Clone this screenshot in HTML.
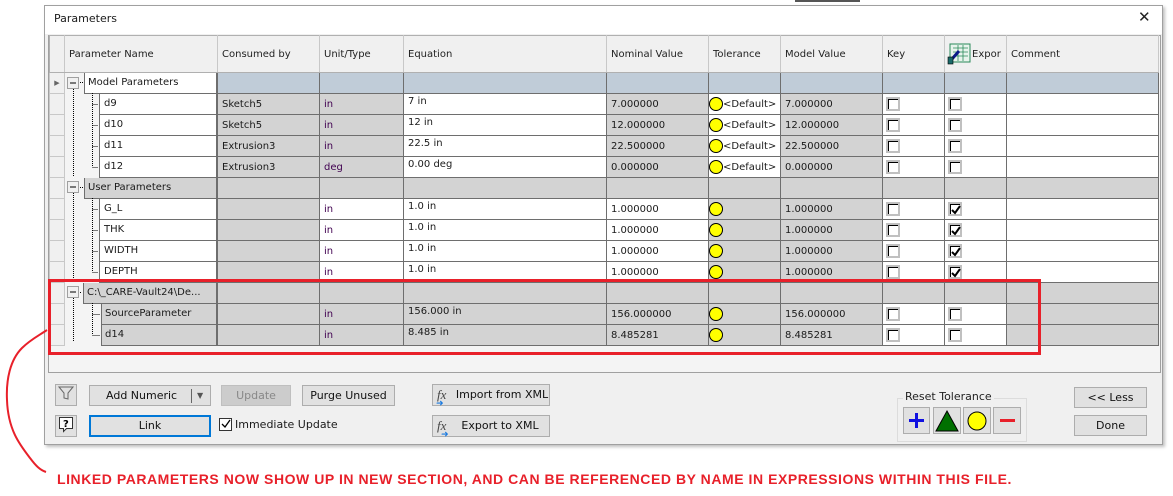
<!DOCTYPE html>
<html><head><meta charset="utf-8"><style>
*{box-sizing:border-box;margin:0;padding:0}
body{width:1173px;height:496px;background:#fff;position:relative;overflow:hidden;font-family:"DejaVu Sans","Liberation Sans",sans-serif;font-size:10px;color:#1a1a1a}
.a{position:absolute}
#dlg{left:44px;top:5px;width:1119px;height:440px;background:#f0f0f0;border:1px solid #a0a0a0;box-shadow:2px 2px 3px rgba(0,0,0,.25)}
#title{left:45px;top:6px;width:1117px;height:28px;background:#fff}
#grid{left:48px;top:35px;width:1113px;height:338px;background:#f4f4f4;border:1px solid #a0a0a0}
table{position:absolute;left:49px;top:35px;border-collapse:collapse;table-layout:fixed}
td{border:1px solid #6e6e6e;height:21px;padding:0 0 0 4px;white-space:nowrap;overflow:hidden;font-size:10px;vertical-align:middle}
tr.h td{height:37px;background:#f0f0f0;border-color:#b0b0b0;border-right-color:#c8c8c8;color:#222}
td.rh{background:#f0f0f0;border-color:#c8c8c8;padding:0}
td.tr{background:#f4f4f4;border:none;padding:0;position:relative}
.n{position:absolute;top:0;right:0;height:21px;border:1px solid #6e6e6e;border-top:none;padding-left:4px;line-height:20px;overflow:hidden}
.w{background:#fff}.g{background:#d3d3d3}.b{background:#c0ccd8}
.u{color:#400050}
.eq{vertical-align:top;padding-top:2px}
.cb{display:inline-block;width:14px;height:14px;border:2px solid #c0c0c0;background:#fff;box-shadow:inset 1px 1px 0 #000;vertical-align:middle;margin-left:-1px;position:relative}
.cb svg{position:absolute;left:1px;top:1px}
.ci{display:inline-block;width:14px;height:14px;border-radius:50%;background:#ffff00;border:1px solid #000;vertical-align:middle;margin-left:-2px}
.btn{position:absolute;background:#e1e1e1;border:1px solid #adadad;text-align:center;font-size:11px;line-height:19px;color:#111;white-space:nowrap}
.red{color:#e8202a}
</style></head><body>
<div class="a" style="left:795px;top:0;width:65px;height:2px;background:#555"></div>
<div id="dlg" class="a"></div>
<div id="title" class="a"></div>
<div class="a" style="left:54px;top:12px;font-size:11px">Parameters</div>
<div class="a" style="left:1138px;top:8px;font-size:15px;color:#222">✕</div>
<div id="grid" class="a"></div>
<table>
<colgroup><col style="width:15px"><col style="width:153px"><col style="width:102px"><col style="width:84px"><col style="width:203px"><col style="width:102px"><col style="width:72px"><col style="width:102px"><col style="width:62px"><col style="width:62px"><col style="width:152px"></colgroup>
<tr class="h"><td class="rh"></td><td>Parameter Name</td><td>Consumed by</td><td>Unit/Type</td><td>Equation</td><td>Nominal Value</td><td>Tolerance</td><td>Model Value</td><td>Key</td><td style="padding-left:2px"><svg width="24" height="22" style="vertical-align:middle"><rect x="3" y="1" width="20" height="18" fill="#e8f4ec" stroke="#2a8a5a"/><path d="M6 5h15M6 9h15M6 13h15M11 2v16M16 2v16" stroke="#2a8a5a" stroke-width=".8"/><path d="M5 16l7-8" stroke="#0a1a8a" stroke-width="3"/><rect x="1" y="14" width="5" height="7" fill="#1a6a6a" stroke="#000" stroke-width=".6"/></svg><span style="margin-left:1px">Expor</span></td><td>Comment</td></tr>
<tr><td class="rh" style="font-size:7px;color:#666;text-align:center">▶</td><td class="tr"><div class="n" style="left:19px;background:#fff;padding-left:3px">Model Parameters</div></td><td class="b"></td><td class="b"></td><td class="b"></td><td class="b"></td><td class="b"></td><td class="b"></td><td class="b"></td><td class="b"></td><td class="b"></td></tr>
<tr><td class="rh"></td><td class="tr"><div class="n" style="left:34px;background:#fff">d9</div></td><td class="g">Sketch5</td><td class="g u">in</td><td class="w eq">7 in</td><td class="g">7.000000</td><td class="w" style="padding-left:2px"><span class="ci"></span>&lt;Default&gt;</td><td class="g">7.000000</td><td class="w"><span class="cb"></span></td><td class="w"><span class="cb"></span></td><td class="w"></td></tr>
<tr><td class="rh"></td><td class="tr"><div class="n" style="left:34px;background:#fff">d10</div></td><td class="g">Sketch5</td><td class="g u">in</td><td class="w eq">12 in</td><td class="g">12.000000</td><td class="w" style="padding-left:2px"><span class="ci"></span>&lt;Default&gt;</td><td class="g">12.000000</td><td class="w"><span class="cb"></span></td><td class="w"><span class="cb"></span></td><td class="w"></td></tr>
<tr><td class="rh"></td><td class="tr"><div class="n" style="left:34px;background:#fff">d11</div></td><td class="g">Extrusion3</td><td class="g u">in</td><td class="w eq">22.5 in</td><td class="g">22.500000</td><td class="w" style="padding-left:2px"><span class="ci"></span>&lt;Default&gt;</td><td class="g">22.500000</td><td class="w"><span class="cb"></span></td><td class="w"><span class="cb"></span></td><td class="w"></td></tr>
<tr><td class="rh"></td><td class="tr"><div class="n" style="left:34px;background:#fff">d12</div></td><td class="g">Extrusion3</td><td class="g u">deg</td><td class="w eq">0.00 deg</td><td class="g">0.000000</td><td class="w" style="padding-left:2px"><span class="ci"></span>&lt;Default&gt;</td><td class="g">0.000000</td><td class="w"><span class="cb"></span></td><td class="w"><span class="cb"></span></td><td class="w"></td></tr>
<tr><td class="rh"></td><td class="tr"><div class="n" style="left:19px;background:#d3d3d3;padding-left:3px">User Parameters</div></td><td class="g"></td><td class="g"></td><td class="g"></td><td class="g"></td><td class="g"></td><td class="g"></td><td class="g"></td><td class="g"></td><td class="g"></td></tr>
<tr><td class="rh"></td><td class="tr"><div class="n" style="left:34px;background:#fff">G_L</div></td><td class="g"></td><td class="w u">in</td><td class="w eq">1.0 in</td><td class="w">1.000000</td><td class="g" style="padding-left:2px"><span class="ci"></span></td><td class="g">1.000000</td><td class="w"><span class="cb"></span></td><td class="w"><span class="cb"><svg width="10" height="10"><path d="M1 5l3 3 5-7" stroke="#000" stroke-width="2" fill="none"/></svg></span></td><td class="w"></td></tr>
<tr><td class="rh"></td><td class="tr"><div class="n" style="left:34px;background:#fff">THK</div></td><td class="g"></td><td class="w u">in</td><td class="w eq">1.0 in</td><td class="w">1.000000</td><td class="g" style="padding-left:2px"><span class="ci"></span></td><td class="g">1.000000</td><td class="w"><span class="cb"></span></td><td class="w"><span class="cb"><svg width="10" height="10"><path d="M1 5l3 3 5-7" stroke="#000" stroke-width="2" fill="none"/></svg></span></td><td class="w"></td></tr>
<tr><td class="rh"></td><td class="tr"><div class="n" style="left:34px;background:#fff">WIDTH</div></td><td class="g"></td><td class="w u">in</td><td class="w eq">1.0 in</td><td class="w">1.000000</td><td class="g" style="padding-left:2px"><span class="ci"></span></td><td class="g">1.000000</td><td class="w"><span class="cb"></span></td><td class="w"><span class="cb"><svg width="10" height="10"><path d="M1 5l3 3 5-7" stroke="#000" stroke-width="2" fill="none"/></svg></span></td><td class="w"></td></tr>
<tr><td class="rh"></td><td class="tr"><div class="n" style="left:34px;background:#fff">DEPTH</div></td><td class="g"></td><td class="w u">in</td><td class="w eq">1.0 in</td><td class="w">1.000000</td><td class="g" style="padding-left:2px"><span class="ci"></span></td><td class="g">1.000000</td><td class="w"><span class="cb"></span></td><td class="w"><span class="cb"><svg width="10" height="10"><path d="M1 5l3 3 5-7" stroke="#000" stroke-width="2" fill="none"/></svg></span></td><td class="w"></td></tr>
<tr><td class="rh"></td><td class="tr"><div class="n" style="left:18px;background:#d3d3d3;padding-left:3px">C:\_CARE-Vault24\De...</div></td><td class="g"></td><td class="g"></td><td class="g"></td><td class="g"></td><td class="g"></td><td class="g"></td><td class="g"></td><td class="g"></td><td class="g"></td></tr>
<tr><td class="rh"></td><td class="tr"><div class="n" style="left:36px;background:#d3d3d3;padding-left:3px">SourceParameter</div></td><td class="g"></td><td class="g u">in</td><td class="g eq">156.000 in</td><td class="g">156.000000</td><td class="g" style="padding-left:2px"><span class="ci"></span></td><td class="g">156.000000</td><td class="w"><span class="cb"></span></td><td class="w"><span class="cb"></span></td><td class="g"></td></tr>
<tr><td class="rh"></td><td class="tr"><div class="n" style="left:36px;background:#d3d3d3;padding-left:3px">d14</div></td><td class="g"></td><td class="g u">in</td><td class="g eq">8.485 in</td><td class="g">8.485281</td><td class="g" style="padding-left:2px"><span class="ci"></span></td><td class="g">8.485281</td><td class="w"><span class="cb"></span></td><td class="w"><span class="cb"></span></td><td class="g"></td></tr>
</table>
<svg class="a" style="left:64px;top:72px" width="40" height="275">
<g stroke="#000" stroke-dasharray="1,1" fill="none">
<path d="M9.5 17V105M14 10.5H19M9.5 121V210M14 115.5H19M14 220.5H18M9.5 226V270"/>
<path d="M28.5 21V95M28.5 32.5H34M28.5 53.5H34M28.5 74.5H34M28.5 95.5H34"/>
<path d="M28.5 126V200M28.5 137.5H34M28.5 158.5H34M28.5 179.5H34M28.5 200.5H34"/>
<path d="M28.5 231V263M28.5 242.5H36M28.5 263.5H36"/>
</g>
<g fill="#f0f0f0" stroke="#a0a0a0"><rect x="3.5" y="5.5" width="11" height="11"/><rect x="3.5" y="109.5" width="11" height="11"/><rect x="3.5" y="214.5" width="11" height="11"/></g>
<path d="M6 11h6M6 115h6M6 220h6" stroke="#000"/>
</svg>
<div class="a" style="left:48px;top:279px;width:993px;height:76px;border:3px solid #e8202a"></div>
<svg class="a" style="left:0;top:320px" width="60" height="160"><path d="M47 10C38 16 30 20 22 28C10 40 6 60 7 80C8 110 20 125 30 138C36 146 40 150 46 152" stroke="#e8202a" stroke-width="2" fill="none"/></svg>
<div class="a red" style="left:57px;top:471px;font-family:'Liberation Sans',sans-serif;font-weight:bold;font-size:14px;letter-spacing:0.55px">LINKED PARAMETERS NOW SHOW UP IN NEW SECTION, AND CAN BE REFERENCED BY NAME IN EXPRESSIONS WITHIN THIS FILE.</div>
<div class="btn" style="left:55px;top:384px;width:22px;height:22px;line-height:18px"><svg width="16" height="16"><path d="M1 2h14l-5 6v6l-4-1V8z" fill="none" stroke="#666"/></svg></div>
<div class="btn" style="left:55px;top:415px;width:22px;height:22px;line-height:18px"><svg width="16" height="18"><path d="M1.5 1.5h13v11h-6l-3 3v-3h-4z" fill="#fff" stroke="#333"/><text x="5" y="11" font-size="10" font-weight="bold" font-family="DejaVu Sans">?</text></svg></div>
<div class="btn" style="left:89px;top:385px;width:122px;height:21px;text-align:left;padding-left:16px">Add Numeric<span style="position:absolute;left:101px;top:3px;height:14px;border-left:1px solid #666"></span><span style="position:absolute;left:107px;top:0;font-size:8px;color:#555">▼</span></div>
<div class="btn" style="left:221px;top:385px;width:70px;height:21px;background:#cccccc;border-color:#bfbfbf;color:#888">Update</div>
<div class="btn" style="left:302px;top:385px;width:93px;height:21px">Purge Unused</div>
<div class="btn" style="left:432px;top:384px;width:118px;height:22px;padding-left:22px;line-height:20px"><i style="position:absolute;left:4px;top:0;font-family:'Liberation Serif',serif;color:#444;font-size:13px">fx</i><span style="position:absolute;left:3px;top:9px;color:#1a7ae0;font-size:9px">➜</span>Import from XML</div>
<div class="btn" style="left:89px;top:415px;width:122px;height:22px;border:2px solid #0078d7;line-height:18px">Link</div>
<div class="a" style="left:219px;top:418px;width:13px;height:13px;border:1px solid #333;background:#fff"><svg width="11" height="11" style="position:absolute;left:0;top:0"><path d="M2 5l3 3 5-7" stroke="#000" stroke-width="1.3" fill="none"/></svg></div>
<div class="a" style="left:235px;top:418px;font-size:11px">Immediate Update</div>
<div class="btn" style="left:432px;top:415px;width:118px;height:22px;padding-left:18px;line-height:20px"><i style="position:absolute;left:4px;top:0;font-family:'Liberation Serif',serif;color:#444;font-size:13px">fx</i><span style="position:absolute;left:8px;top:9px;color:#1a7ae0;font-size:9px">➜</span>Export to XML</div>
<div class="a" style="left:897px;top:398px;width:130px;height:44px;border:1px solid #dcdcdc"></div>
<div class="a" style="left:903px;top:390px;background:#f0f0f0;padding:0 2px;font-size:11px;color:#222">Reset Tolerance</div>
<div class="btn" style="left:903px;top:407px;width:27px;height:27px"><div style="position:absolute;left:5px;top:11px;width:15px;height:3px;background:#1010e0"></div><div style="position:absolute;left:11px;top:5px;width:3px;height:15px;background:#1010e0"></div></div>
<div class="btn" style="left:933px;top:407px;width:28px;height:27px"><svg width="26" height="25"><path d="M13 3L24 23H2z" fill="#007000" stroke="#000"/></svg></div>
<div class="btn" style="left:963px;top:407px;width:28px;height:27px"><svg width="26" height="25"><circle cx="13" cy="13" r="9" fill="#ffff00" stroke="#000"/></svg></div>
<div class="btn" style="left:993px;top:407px;width:28px;height:27px"><div style="position:absolute;left:6px;top:11px;width:15px;height:3px;background:#e8202a"></div></div>
<div class="btn" style="left:1074px;top:387px;width:73px;height:21px">&lt;&lt; Less</div>
<div class="btn" style="left:1074px;top:415px;width:73px;height:21px">Done</div>
</body></html>
